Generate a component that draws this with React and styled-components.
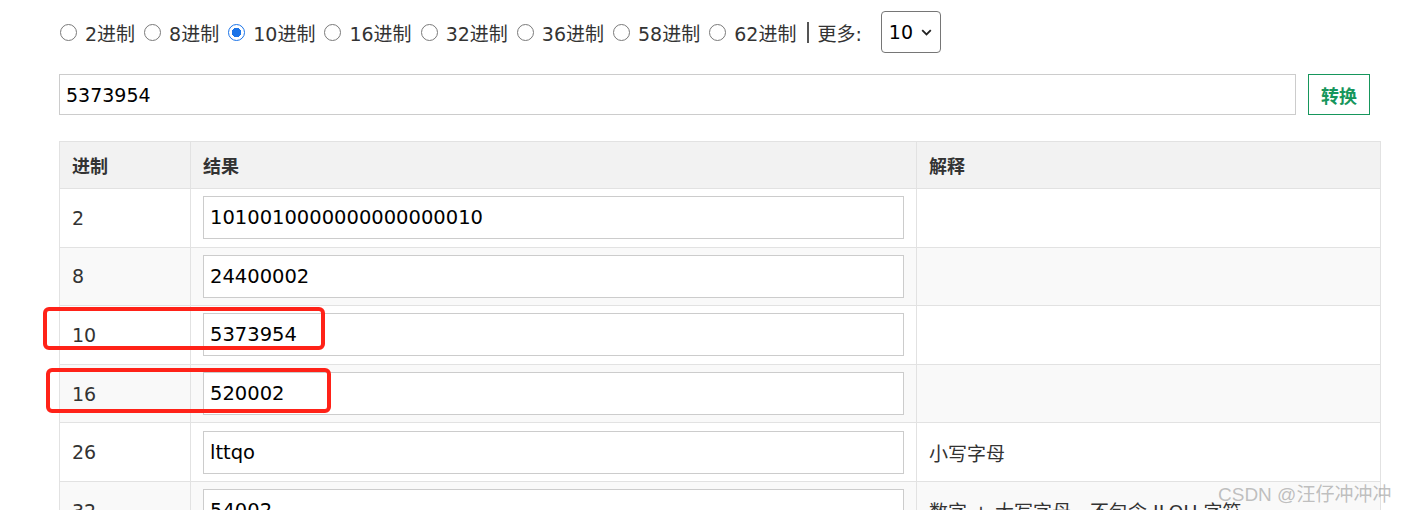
import React from 'react'
import styled, { createGlobalStyle } from 'styled-components'

const GlobalStyle = createGlobalStyle`
  body {
    margin: 0;
    background: #fff;
    font-family: "DejaVu Sans", "Noto Sans CJK SC", sans-serif;
    color: #333;
    overflow: hidden;
  }
`

const bases = ['2', '8', '10', '16', '32', '36', '58', '62']

const rows = [
  { base: '2', value: '1010010000000000000010', note: '' },
  { base: '8', value: '24400002', note: '' },
  { base: '10', value: '5373954', note: '' },
  { base: '16', value: '520002', note: '' },
  { base: '26', value: 'lttqo', note: '小写字母' },
  { base: '32', value: '54002', note: '数字 + 大写字母，不包含 ILOU 字符' },
]

const App = () => {
  return (
    <Page>
      <GlobalStyle />
      <Toolbar>
        {bases.map((b) => (
          <RadioLabel key={b}>
            <Radio checked={b === '10'} />
            {b}进制
          </RadioLabel>
        ))}
        <Divider />
        <MoreText>更多:</MoreText>
        <SelectBox>
          10
          <svg width="11" height="7" viewBox="0 0 11 7">
            <polyline points="1.2,1.2 5.5,5.5 9.8,1.2" fill="none" stroke="#222" strokeWidth="1.8" />
          </svg>
        </SelectBox>
      </Toolbar>

      <InputRow>
        <MainInput defaultValue="5373954" />
        <ConvertButton>转换</ConvertButton>
      </InputRow>

      <Table>
        <thead>
          <tr>
            <HeadCell style={{ width: 106 }}>进制</HeadCell>
            <HeadCell style={{ width: 701 }}>结果</HeadCell>
            <HeadCell>解释</HeadCell>
          </tr>
        </thead>
        <tbody>
          {rows.map((r, i) => (
            <BodyRow key={r.base} striped={i % 2 === 1}>
              <Cell>{r.base}</Cell>
              <Cell>
                <CellInput defaultValue={r.value} />
              </Cell>
              <Cell>{r.note}</Cell>
            </BodyRow>
          ))}
        </tbody>
      </Table>

      <Mark style={{ left: 43, top: 307, width: 282, height: 43 }} />
      <Mark style={{ left: 46, top: 368, width: 285, height: 45 }} />
      <Watermark>CSDN @汪仔冲冲冲</Watermark>
    </Page>
  )
}

export default App

const Page = styled.div`
  position: relative;
  padding: 11px 23px 0 59px;
  height: 510px;
  box-sizing: border-box;
`

const Toolbar = styled.div`
  display: flex;
  align-items: center;
  height: 42px;
  font-size: 19px;
  color: #333;
`

const RadioLabel = styled.label`
  display: flex;
  align-items: center;
  margin-right: 8px;
  white-space: nowrap;
`

const Radio = styled.span`
  box-sizing: border-box;
  width: 17px;
  height: 17px;
  border-radius: 50%;
  margin: 0 8px 0 1px;
  border: ${(p) => (p.checked ? '1.6px solid #1a73e8' : '1.6px solid #7a7a7a')};
  background: ${(p) => (p.checked ? 'radial-gradient(circle, #1a73e8 0 4.5px, #fff 5px)' : '#fff')};
`

const Divider = styled.span`
  width: 2px;
  height: 21px;
  margin: 0 8px 0 3px;
  background: #555;
`

const MoreText = styled.span`
  margin-right: 19px;
`

const SelectBox = styled.div`
  box-sizing: border-box;
  display: flex;
  align-items: center;
  justify-content: space-between;
  width: 60px;
  height: 42px;
  padding: 0 8px 0 7px;
  border: 1px solid #767676;
  border-radius: 4px;
  color: #000;
  font-size: 19px;
`

const InputRow = styled.div`
  display: flex;
  gap: 12px;
  margin-top: 21px;
  margin-right: 11px;
`

const MainInput = styled.input`
  flex: 1;
  box-sizing: border-box;
  height: 41px;
  padding: 0 6px;
  border: 1px solid #ccc;
  font-family: inherit;
  font-size: 19px;
  color: #000;
  outline: none;
`

const ConvertButton = styled.button`
  box-sizing: border-box;
  width: 62px;
  height: 41px;
  border: 1px solid #16965c;
  background: #fff;
  color: #16965c;
  font-family: inherit;
  font-size: 18px;
  font-weight: bold;
  padding: 0;
`

const Table = styled.table`
  width: 1322px;
  margin-top: 26px;
  border-collapse: collapse;
  font-size: 18px;
  color: #333;
`

const HeadCell = styled.th`
  height: 46px;
  padding: 0 12px;
  text-align: left;
  font-weight: bold;
  background: #f2f2f2;
  border: 1px solid #e2e2e2;
  box-sizing: content-box;
`

const BodyRow = styled.tr`
  background: ${(p) => (p.striped ? '#f9f9f9' : '#fff')};
`

const Cell = styled.td`
  padding: 7.3px 12px;
  border: 1px solid #e2e2e2;
  font-size: 19px;
`

const CellInput = styled.input`
  display: block;
  box-sizing: border-box;
  width: 100%;
  height: 43px;
  padding: 0 6px;
  border: 1px solid #ccc;
  background: #fff;
  font-family: inherit;
  font-size: 19.5px;
  color: #000;
  outline: none;
`

const Mark = styled.div`
  position: absolute;
  box-sizing: border-box;
  border: 4px solid #ff2218;
  border-radius: 6px;
`

const Watermark = styled.div`
  position: absolute;
  left: 1218px;
  top: 479px;
  font-family: "Liberation Sans", "Noto Sans CJK SC", sans-serif;
  font-size: 19px;
  color: rgba(140, 140, 140, 0.55);
  white-space: nowrap;
`
